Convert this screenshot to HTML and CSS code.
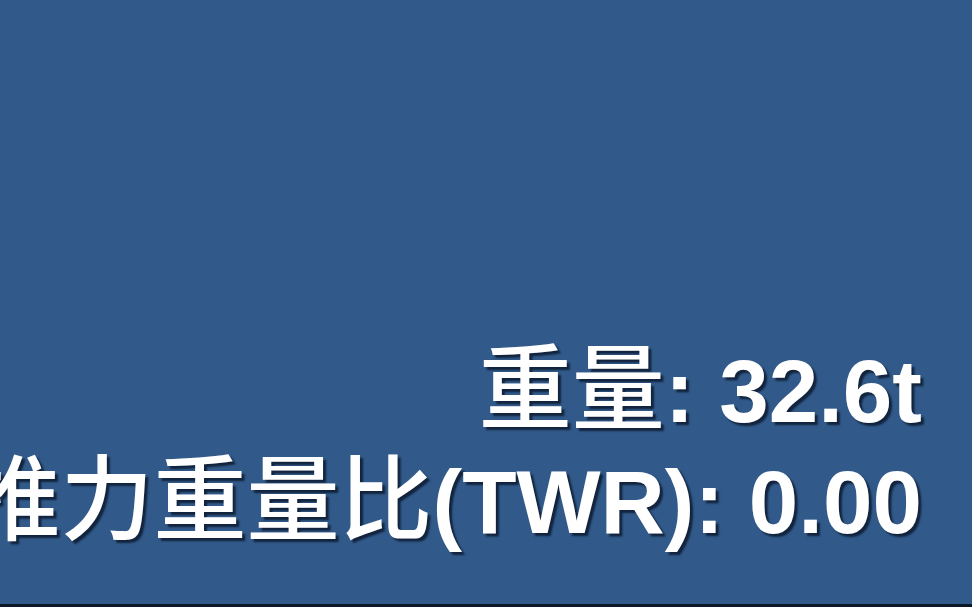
FILE: index.html
```html
<!DOCTYPE html>
<html lang="zh-CN">
  <head>
    <meta charset="UTF-8" />
    <meta name="viewport" content="width=device-width, initial-scale=1.0" />
    <title>TWR</title>
    <link rel="stylesheet" href="styles.css">
  </head>
  <body>
    <div class="stage">
      <div class="stats">
        <div class="stat"><span class="cjk">重量</span>: 32.6t</div>
        <div class="stat"><span class="cjk">推力重量比</span>(TWR): 0.00</div>
      </div>
    </div>
    <div class="bar"></div>
  </body>
</html>
```

FILE: styles.css
```css
* {
  margin: 0;
  padding: 0;
  box-sizing: border-box;
}
html,
body {
  height: 100%;
}
body {
  display: flex;
  flex-direction: column;
  overflow: hidden;
  background-color: #315a8a;
  font-family: "Liberation Sans", "Noto Sans CJK SC", sans-serif;
}
.stage {
  flex: 1;
  display: flex;
  flex-direction: column;
  justify-content: flex-end;
  align-items: flex-end;
  padding: 0 50px 46px 0;
}
.stats {
  display: flex;
  flex-direction: column;
  align-items: flex-end;
}
.stat {
  color: #fff;
  font-size: 89px;
  font-weight: bold;
  line-height: 111px;
  height: 111px;
  white-space: nowrap;
  text-shadow: 3px 3px 2px rgba(8, 18, 36, 0.75);
}
/* ideographs sit a bit larger and lighter than the latin digits */
.cjk {
  font-family: "Noto Sans CJK SC", sans-serif;
  font-size: 93px;
  font-weight: 500;
  line-height: 0;
}
.bar {
  height: 3px;
  background-color: #0b1626;
}
```
